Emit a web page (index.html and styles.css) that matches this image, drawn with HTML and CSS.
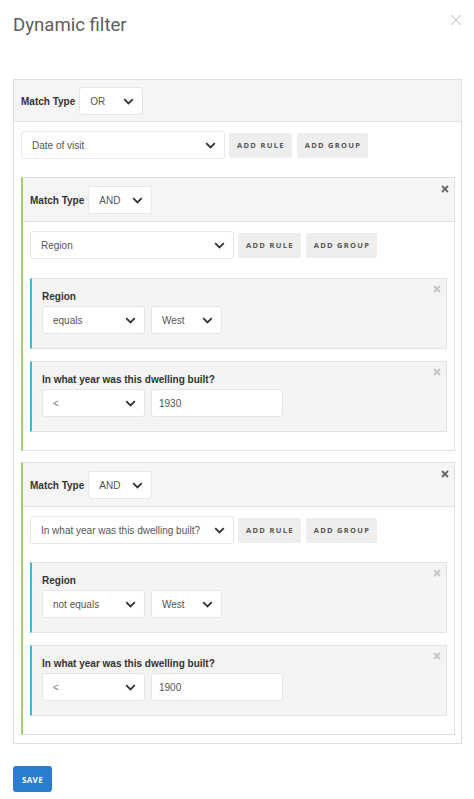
FILE: index.html
```html
<!DOCTYPE html>
<html>
<head>
<meta charset="utf-8">
<link rel="stylesheet" href="styles.css">
</head>
<body>
<div class="modal">
  <div class="modal-head">
    <h1 class="title">Dynamic filter</h1>
    <svg class="modal-close" width="12" height="12" viewBox="0 0 12 12"><path d="M1 1L11 11M11 1L1 11" stroke="#d4d4d4" stroke-width="1.2" fill="none"/></svg>
  </div>

  <div class="group outer">
    <div class="group-header">
      <span class="mt-label">Match Type</span>
      <div class="select sel-mt"><span>OR</span><svg class="chev" width="11" height="7" viewBox="0 0 11 7"><path d="M1.2 1.2L5.5 5.5L9.8 1.2" stroke="#333" stroke-width="1.8" fill="none"/></svg></div>
    </div>
    <div class="group-body outer-body">
      <div class="add-row">
        <div class="select sel-field"><span>Date of visit</span><svg class="chev" width="11" height="7" viewBox="0 0 11 7"><path d="M1.2 1.2L5.5 5.5L9.8 1.2" stroke="#333" stroke-width="1.8" fill="none"/></svg></div>
        <button class="btn">ADD RULE</button>
        <button class="btn">ADD GROUP</button>
      </div>

      <div class="group sub">
        <svg class="group-close" width="8" height="8" viewBox="0 0 8 8"><path d="M1 1L7 7M7 1L1 7" stroke="#666" stroke-width="1.8" fill="none"/></svg>
        <div class="group-header sub-header">
          <span class="mt-label">Match Type</span>
          <div class="select sel-mt"><span>AND</span><svg class="chev" width="11" height="7" viewBox="0 0 11 7"><path d="M1.2 1.2L5.5 5.5L9.8 1.2" stroke="#333" stroke-width="1.8" fill="none"/></svg></div>
        </div>
        <div class="group-body sub-body">
          <div class="add-row">
            <div class="select sel-field"><span>Region</span><svg class="chev" width="11" height="7" viewBox="0 0 11 7"><path d="M1.2 1.2L5.5 5.5L9.8 1.2" stroke="#333" stroke-width="1.8" fill="none"/></svg></div>
            <button class="btn">ADD RULE</button>
            <button class="btn">ADD GROUP</button>
          </div>
          <div class="rule">
            <svg class="rule-close" width="8" height="8" viewBox="0 0 8 8"><path d="M1 1L7 7M7 1L1 7" stroke="#c4c4c4" stroke-width="1.8" fill="none"/></svg>
            <div class="rule-label">Region</div>
            <div class="rule-controls">
              <div class="select sel-op"><span>equals</span><svg class="chev" width="11" height="7" viewBox="0 0 11 7"><path d="M1.2 1.2L5.5 5.5L9.8 1.2" stroke="#333" stroke-width="1.8" fill="none"/></svg></div>
              <div class="select sel-val"><span>West</span><svg class="chev" width="11" height="7" viewBox="0 0 11 7"><path d="M1.2 1.2L5.5 5.5L9.8 1.2" stroke="#333" stroke-width="1.8" fill="none"/></svg></div>
            </div>
          </div>
          <div class="rule">
            <svg class="rule-close" width="8" height="8" viewBox="0 0 8 8"><path d="M1 1L7 7M7 1L1 7" stroke="#c4c4c4" stroke-width="1.8" fill="none"/></svg>
            <div class="rule-label">In what year was this dwelling built?</div>
            <div class="rule-controls">
              <div class="select sel-op"><span class="lt">&lt;</span><svg class="chev" width="11" height="7" viewBox="0 0 11 7"><path d="M1.2 1.2L5.5 5.5L9.8 1.2" stroke="#333" stroke-width="1.8" fill="none"/></svg></div>
              <div class="input">1930</div>
            </div>
          </div>
        </div>
      </div>

      <div class="group sub second">
        <svg class="group-close" width="8" height="8" viewBox="0 0 8 8"><path d="M1 1L7 7M7 1L1 7" stroke="#666" stroke-width="1.8" fill="none"/></svg>
        <div class="group-header sub-header">
          <span class="mt-label">Match Type</span>
          <div class="select sel-mt"><span>AND</span><svg class="chev" width="11" height="7" viewBox="0 0 11 7"><path d="M1.2 1.2L5.5 5.5L9.8 1.2" stroke="#333" stroke-width="1.8" fill="none"/></svg></div>
        </div>
        <div class="group-body sub-body">
          <div class="add-row">
            <div class="select sel-field"><span>In what year was this dwelling built?</span><svg class="chev" width="11" height="7" viewBox="0 0 11 7"><path d="M1.2 1.2L5.5 5.5L9.8 1.2" stroke="#333" stroke-width="1.8" fill="none"/></svg></div>
            <button class="btn">ADD RULE</button>
            <button class="btn">ADD GROUP</button>
          </div>
          <div class="rule">
            <svg class="rule-close" width="8" height="8" viewBox="0 0 8 8"><path d="M1 1L7 7M7 1L1 7" stroke="#c4c4c4" stroke-width="1.8" fill="none"/></svg>
            <div class="rule-label">Region</div>
            <div class="rule-controls">
              <div class="select sel-op"><span>not equals</span><svg class="chev" width="11" height="7" viewBox="0 0 11 7"><path d="M1.2 1.2L5.5 5.5L9.8 1.2" stroke="#333" stroke-width="1.8" fill="none"/></svg></div>
              <div class="select sel-val"><span>West</span><svg class="chev" width="11" height="7" viewBox="0 0 11 7"><path d="M1.2 1.2L5.5 5.5L9.8 1.2" stroke="#333" stroke-width="1.8" fill="none"/></svg></div>
            </div>
          </div>
          <div class="rule">
            <svg class="rule-close" width="8" height="8" viewBox="0 0 8 8"><path d="M1 1L7 7M7 1L1 7" stroke="#c4c4c4" stroke-width="1.8" fill="none"/></svg>
            <div class="rule-label">In what year was this dwelling built?</div>
            <div class="rule-controls">
              <div class="select sel-op"><span class="lt">&lt;</span><svg class="chev" width="11" height="7" viewBox="0 0 11 7"><path d="M1.2 1.2L5.5 5.5L9.8 1.2" stroke="#333" stroke-width="1.8" fill="none"/></svg></div>
              <div class="input">1900</div>
            </div>
          </div>
        </div>
      </div>
    </div>
  </div>

  <button class="save">SAVE</button>
</div>
</body>
</html>
```
FILE: styles.css
```css
* { box-sizing: border-box; }
body {
  margin: 0;
  background: #fff;
  font-family: "Liberation Sans", Arial, sans-serif;
  color: #555;
}
.modal {
  padding: 0 12px 0 13px;
}
.modal-head {
  position: relative;
}
.title {
  margin: 0;
  padding: 13px 0 42px;
  font-family: Roboto, sans-serif;
  font-weight: 400;
  font-size: 18.6px;
  line-height: 24px;
  color: #5e5e5e;
}
.modal-close {
  position: absolute;
  top: 14px;
  right: 0;
}
.group {
  border: 1px solid #e0e0e0;
  background: #fff;
}
.group.sub {
  position: relative;
  border-left: 2px solid #a3cf6e;
}
.group.second {
  margin-top: 11px;
}
.group-header {
  display: flex;
  align-items: center;
  gap: 4px;
  background: #f5f5f5;
  border-bottom: 1px solid #e0e0e0;
  padding: 7px 7px 6px;
}
.sub-header {
  padding: 8px 7px 7px;
}
.mt-label {
  font-weight: 700;
  font-size: 10px;
  color: #333;
}
.select {
  display: flex;
  align-items: center;
  justify-content: space-between;
  height: 28px;
  padding: 0 8px 0 10px;
  background: #fff;
  border: 1px solid #e6e6e6;
  border-radius: 3px;
  font-size: 10px;
  color: #555;
  white-space: nowrap;
}
.chev { flex: none; }
.sel-mt { width: 64px; }
.sel-field { width: 204px; }
.sel-op { width: 103px; }
.sel-val { width: 71px; }
.lt { color: #777; }
.input {
  display: flex;
  align-items: center;
  width: 132px;
  height: 28px;
  padding: 0 7px;
  background: #fff;
  border: 1px solid #e6e6e6;
  border-radius: 3px;
  font-size: 10px;
  color: #555;
}
.group-body {
  display: flex;
  flex-direction: column;
}
.outer-body {
  padding: 9px 6px 8px 7px;
}
.sub-body {
  padding: 9px 7px 18px 7px;
  gap: 12px;
}
.add-row {
  display: flex;
  align-items: center;
  gap: 4px;
}
.outer-body > .add-row { margin-bottom: 18px; }
.sub-body > .add-row { margin-bottom: 7px; }
.second .sub-body > .add-row { margin-bottom: 6px; }
.btn {
  height: 25px;
  padding: 0 7px 0 8px;
  margin: 0;
  border: none;
  border-radius: 2px;
  background: #eeeeee;
  font-family: "Open Sans", sans-serif;
  font-weight: 700;
  font-size: 7.5px;
  letter-spacing: 1.3px;
  color: #555;
}
.btn + .btn { margin-left: 1px; }
.group-close {
  position: absolute;
  top: 7px;
  right: 5px;
}
.rule {
  position: relative;
  background: #f4f4f4;
  border: 1px solid #e2e2e2;
  border-left: 2px solid #34bcdc;
  padding: 10px 10px 14px 10px;
}
.rule-close {
  position: absolute;
  top: 6px;
  right: 5px;
}
.rule-label {
  font-weight: 700;
  font-size: 10px;
  line-height: 15px;
  color: #333;
  margin-bottom: 2px;
}
.rule-controls {
  display: flex;
  gap: 6px;
}
.save {
  display: block;
  margin: 22px 0 0;
  width: 39px;
  height: 26px;
  padding: 0;
  border: none;
  border-radius: 3px;
  background: #2b7dcf;
  color: #fff;
  font-family: "Open Sans", sans-serif;
  font-weight: 700;
  font-size: 8px;
  letter-spacing: 0.4px;
}
```
